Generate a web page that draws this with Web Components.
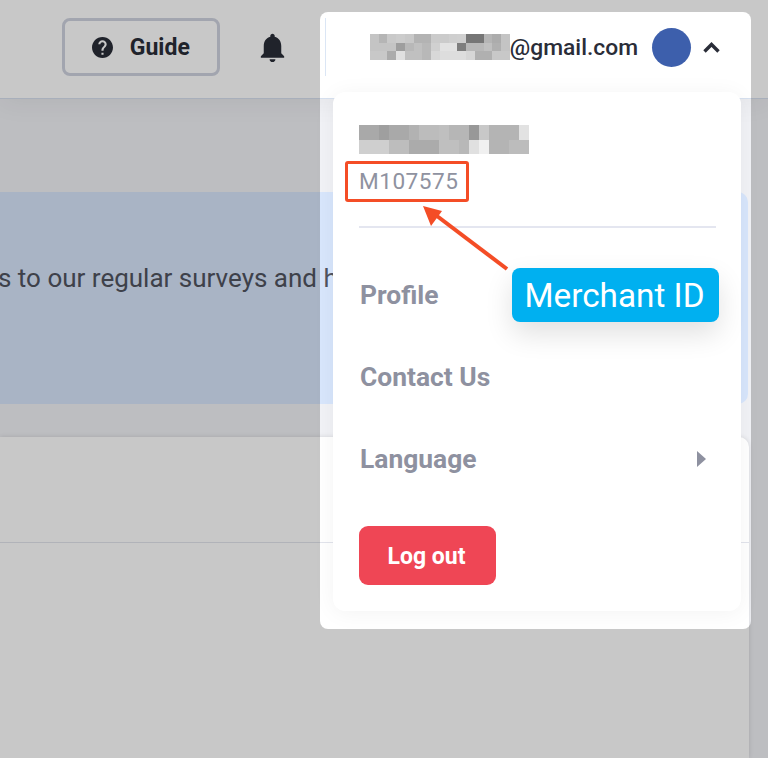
<!DOCTYPE html>
<html lang="en">
<head>
<meta charset="utf-8">
<title>Merchant ID</title>
<style>
  html, body { margin: 0; height: 758px; overflow: hidden; }
  body { position: relative; background: #f1f2f6; font-family: Roboto, "Liberation Sans", sans-serif; color: #2a2d38; }
</style>
</head>
<body>
<top-bar></top-bar>
<page-content>
  <notice-banner>s to our regular surveys and h</notice-banner>
  <data-card></data-card>
</page-content>
<user-dropdown>
  <menu-item>Profile</menu-item>
  <menu-item>Contact Us</menu-item>
  <menu-item arrow>Language</menu-item>
</user-dropdown>

<script>
class PixelMosaic extends HTMLElement {
  connectedCallback() {
    const rows = this.getAttribute('rows').split('|').map(r => r.trim().split(' '));
    const w = this.getAttribute('cell-w');
    const h = this.getAttribute('cell-h');
    const cells = rows.flat().map(c => `<i style="background:#${c}${c}${c}"></i>`).join('');
    this.attachShadow({ mode: 'open' }).innerHTML = `
    <style>
      :host { display: grid; grid-template-columns: repeat(${rows[0].length}, ${w}px); grid-auto-rows: ${h}px; filter: blur(.4px); }
    </style>
    ${cells}`;
  }
}
customElements.define('pixel-mosaic', PixelMosaic);

class TopBar extends HTMLElement {
  constructor() {
    super();
    this.attachShadow({ mode: 'open' }).innerHTML = `
    <style>
      :host {
        display: flex;
        align-items: center;
        justify-content: flex-end;
        box-sizing: border-box;
        height: 99px;
        padding: 0 48px 4px 0;
        background: white;
        border-bottom: 1px solid #d6e0ef;
        box-shadow: 0 5px 24px rgba(0, 0, 0, .05);
        position: relative;
      }
      .guide {
        display: flex;
        align-items: center;
        gap: 17px;
        box-sizing: border-box;
        width: 158px;
        height: 58px;
        padding: 0 27px;
        border: 3px solid #cfd3df;
        border-radius: 8px;
        font-size: 23px;
        font-weight: 700;
      }
      .bell { margin-left: 35px; }
      .divider { width: 1px; height: 58px; margin: 0 44px 0 35px; background: #dbe6f5; }
      .email { display: flex; align-items: center; font-size: 22.8px; font-weight: 500; }
      .avatar { width: 39px; height: 39px; margin: 0 12px 0 14px; border-radius: 50%; background: #3d5fac; }
      svg { display: block; fill: #2a2d38; }
    </style>
    <div class="guide">
      <svg width="23" height="23" viewBox="2 2 20 20"><path d="M12 2C6.48 2 2 6.48 2 12s4.48 10 10 10 10-4.48 10-10S17.52 2 12 2zm1 17h-2v-2h2v2zm2.07-7.75l-.9.92C13.45 12.9 13 13.5 13 15h-2v-.5c0-1.1.45-2.1 1.17-2.83l1.24-1.26c.37-.36.59-.86.59-1.41 0-1.1-.9-2-2-2s-2 .9-2 2H8c0-2.21 1.79-4 4-4s4 1.79 4 4c0 .88-.36 1.68-.93 2.25z"/></svg>
      Guide
    </div>
    <svg class="bell" width="35" height="35" viewBox="0 0 24 24"><path d="M12 22c1.1 0 2-.9 2-2h-4c0 1.1.89 2 2 2zm6-6v-5c0-3.07-1.64-5.64-4.5-6.32V4c0-.83-.67-1.5-1.5-1.5s-1.5.67-1.5 1.5v.68C7.63 5.36 6 7.92 6 11v5l-2 2v1h16v-1l-2-2z"/></svg>
    <div class="divider"></div>
    <div class="email">
      <pixel-mosaic cell-w="8.75" cell-h="8.67" rows="c4 b5 c9 cc c8 b3 b3 cb cb cf d0 76 76 b5 ac c4|c4 c4 c4 9e b8 c0 b8 d0 e2 e2 7e b8 b8 c0 b0 c4|c8 c8 ab e0 c0 c0 b8 d8 dd dd dd d6 b0 b0 c8 c8"></pixel-mosaic>
      <span>@gmail.com</span>
    </div>
    <div class="avatar"></div>
    <svg width="17" height="11" viewBox="0 0 17 11"><path d="M1.5 9.5 8.5 2.5 15.5 9.5" fill="none" stroke="#2a2d38" stroke-width="3.4"/></svg>
    `;
  }
}
customElements.define('top-bar', TopBar);

class PageContent extends HTMLElement {
  constructor() {
    super();
    this.attachShadow({ mode: 'open' }).innerHTML = `
    <style>
      :host {
        display: flex;
        flex-direction: column;
        gap: 33px;
        padding: 93px 19px 0 0;
      }
    </style>
    <slot></slot>
    `;
  }
}
customElements.define('page-content', PageContent);

class NoticeBanner extends HTMLElement {
  constructor() {
    super();
    this.attachShadow({ mode: 'open' }).innerHTML = `
    <style>
      :host {
        display: block;
        box-sizing: border-box;
        height: 212px;
        margin-right: 1px;
        padding-top: 70px;
        background: #d8e6fc;
        border-radius: 0 10px 10px 0;
        font-size: 26px;
        line-height: 32px;
        white-space: nowrap;
        color: #50535f;
      }
      .line { display: block; margin-left: -2px; }
    </style>
    <span class="line"><slot></slot></span>
    `;
  }
}
customElements.define('notice-banner', NoticeBanner);

class DataCard extends HTMLElement {
  constructor() {
    super();
    this.attachShadow({ mode: 'open' }).innerHTML = `
    <style>
      :host {
        display: block;
        height: 321px;
        background: white;
        border-radius: 0 10px 0 0;
        box-shadow: 0 0 5px rgba(0, 0, 0, .12);
      }
      .head { height: 105px; border-bottom: 1px solid #e2e4ec; }
    </style>
    <div class="head"></div>
    `;
  }
}
customElements.define('data-card', DataCard);

class MenuItem extends HTMLElement {
  constructor() {
    super();
    this.attachShadow({ mode: 'open' }).innerHTML = `
    <style>
      :host {
        display: flex;
        align-items: center;
        justify-content: space-between;
        height: 82px;
        padding: 0 10px 0 1px;
        font-size: 26.4px;
        font-weight: 700;
        color: #8e91a0;
      }
      svg { display: none; fill: #8e91a0; }
      :host([arrow]) svg { display: block; }
    </style>
    <slot></slot>
    <svg width="9" height="16" viewBox="0 0 9 16"><path d="M0 0 9 8 0 16z"/></svg>
    `;
  }
}
customElements.define('menu-item', MenuItem);

class UserDropdown extends HTMLElement {
  constructor() {
    super();
    this.attachShadow({ mode: 'open' }).innerHTML = `
    <style>
      :host {
        position: absolute;
        left: 320px;
        top: 12px;
        width: 431px;
        height: 617px;
        border-radius: 8px;
        box-shadow: 0 0 0 2000px rgba(0, 0, 0, .215);
      }
      .panel {
        position: absolute;
        left: 13px;
        top: 80px;
        box-sizing: border-box;
        width: 408px;
        height: 519px;
        padding: 33px 25px 26px 26px;
        background: white;
        border-radius: 12px;
        box-shadow: 0 2px 22px rgba(0, 0, 0, .05);
      }
      .id {
        margin-top: 11px;
        font-size: 22.6px;
        line-height: 34px;
        letter-spacing: .5px;
        color: #8f92a0;
      }
      hr { height: 2px; margin: 27px 0 26px; border: 0; background: #e4e6f0; }
      .logout {
        display: flex;
        align-items: center;
        justify-content: center;
        box-sizing: border-box;
        width: 137px;
        height: 59px;
        margin-top: 26px;
        padding: 1px 2px 0 0;
        background: #ef4655;
        border-radius: 9px;
        font-size: 23px;
        font-weight: 700;
        color: white;
      }
      .id-box {
        position: absolute;
        left: 25px;
        top: 149px;
        box-sizing: border-box;
        width: 124px;
        height: 41px;
        border: 3px solid #f44d26;
        border-radius: 3px;
      }
      .arrow { position: absolute; left: 0; top: 0; pointer-events: none; }
      .tag {
        position: absolute;
        left: 192px;
        top: 256px;
        display: flex;
        align-items: center;
        justify-content: center;
        box-sizing: border-box;
        width: 207px;
        height: 54px;
        padding-right: 2px;
        background: #00b0f0;
        border-radius: 8px;
        box-shadow: 0 12px 28px rgba(0, 0, 0, .12);
        font-size: 33.3px;
        color: white;
      }
    </style>
    <div class="panel">
      <pixel-mosaic cell-w="10" cell-h="14.5" rows="a9 a9 9f a9 a9 b2 bc bc bf b6 b6 98 c8 b4 b4 b4 e2|cf cf cf bd bd ab ab ab bf bf b8 e0 f0 b4 b4 bc bc"></pixel-mosaic>
      <div class="id">M107575</div>
      <hr>
      <slot></slot>
      <div class="logout">Log out</div>
    </div>
    <div class="id-box"></div>
    <svg class="arrow" width="431" height="617" viewBox="0 0 431 617">
      <path d="M187 257 113 201" stroke="#f44d26" stroke-width="4"/>
      <path d="M103 194 122 199 111 214z" fill="#f44d26"/>
    </svg>
    <div class="tag">Merchant ID</div>
    `;
  }
}
customElements.define('user-dropdown', UserDropdown);
</script>
</body>
</html>
